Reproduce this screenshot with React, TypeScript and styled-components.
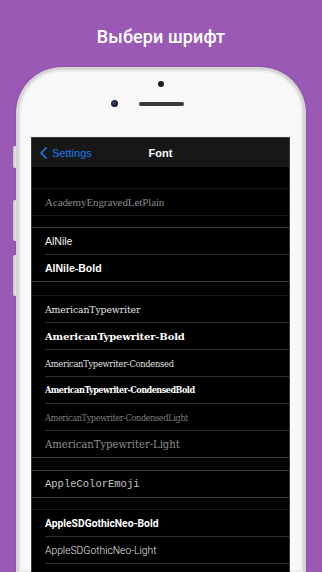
import * as React from "react";
import styled, { createGlobalStyle } from "styled-components";

type Face = {
  name: string;
  family: string;
  weight?: number;
  size: number;
  color: string;
  spacing?: number;
};

type Section = {
  gap: number;
  top: "faint" | "strong" | "none";
  bottom: "faint" | "strong" | "none";
  open?: boolean;
  rows: Face[];
};

const serif = `"Liberation Serif", serif`;
const slab = `"DejaVu Serif", serif`;
const slabNarrow = `"DejaVu Serif Condensed", "DejaVu Serif", serif`;
const sans = `"Liberation Sans", Arial, sans-serif`;
const gothic = `Roboto, "Liberation Sans", sans-serif`;

const sections: Section[] = [
  {
    gap: 21,
    top: "faint",
    bottom: "faint",
    rows: [{ name: "AcademyEngravedLetPlain", family: serif, size: 11, color: "#8a8a8a", spacing: -0.1 }],
  },
  {
    gap: 11,
    top: "strong",
    bottom: "strong",
    rows: [
      { name: "AlNile", family: sans, size: 10.5, color: "#f2f2f2" },
      { name: "AlNile-Bold", family: sans, weight: 700, size: 10.5, color: "#ffffff" },
    ],
  },
  {
    gap: 13,
    top: "faint",
    bottom: "strong",
    rows: [
      { name: "AmericanTypewriter", family: slab, size: 9.4, color: "#e4e4e4", spacing: -0.15 },
      { name: "AmericanTypewriter-Bold", family: slab, weight: 700, size: 10, color: "#ffffff", spacing: -0.15 },
      { name: "AmericanTypewriter-Condensed", family: slabNarrow, size: 9.2, color: "#e0e0e0", spacing: -0.25 },
      { name: "AmericanTypewriter-CondensedBold", family: slabNarrow, weight: 700, size: 9, color: "#ffffff", spacing: -0.5 },
      { name: "AmericanTypewriter-CondensedLight", family: slabNarrow, size: 9.2, color: "#7c7c7c", spacing: -0.45 },
      { name: "AmericanTypewriter-Light", family: slab, size: 10.2, color: "#8c8c8c", spacing: -0.1 },
    ],
  },
  {
    gap: 12,
    top: "strong",
    bottom: "strong",
    rows: [{ name: "AppleColorEmoji", family: `"Liberation Mono", monospace`, size: 10.5, color: "#c6c6c6" }],
  },
  {
    gap: 11,
    top: "faint",
    bottom: "none",
    open: true,
    rows: [
      { name: "AppleSDGothicNeo-Bold", family: gothic, weight: 700, size: 10.3, color: "#ffffff" },
      { name: "AppleSDGothicNeo-Light", family: gothic, weight: 300, size: 10.3, color: "#e6e6e6" },
    ],
  },
];

const lineColor = { faint: "#1a1a1a", strong: "#3d3d3d", none: "transparent" };

const App: React.FC = () => {
  return (
    <Page>
      <GlobalStyle />
      <Title>Выбери шрифт</Title>
      <Phone>
        <SideButton $top={76} $height={22} />
        <SideButton $top={130} $height={41} />
        <SideButton $top={185} $height={41} />
        <TopBezel>
          <Sensor />
          <SpeakerRow>
            <Camera />
            <Speaker />
          </SpeakerRow>
        </TopBezel>
        <Screen>
          <NavBar>
            <BackButton>
              <svg width="7" height="12" viewBox="0 0 7 12">
                <path d="M6 1 L1.2 6 L6 11" fill="none" stroke="#1a7cf0" strokeWidth="1.8" strokeLinecap="round" strokeLinejoin="round" />
              </svg>
              Settings
            </BackButton>
            <NavTitle>Font</NavTitle>
            <span />
          </NavBar>
          {sections.map((section, i) => (
            <SectionBlock key={i} $gap={section.gap} $top={lineColor[section.top]} $bottom={lineColor[section.bottom]}>
              {section.rows.map((row, j) => (
                <Row key={row.name} $divider={section.open || j < section.rows.length - 1}>
                  <RowText
                    $family={row.family}
                    $weight={row.weight ?? 400}
                    $size={row.size}
                    $color={row.color}
                    $spacing={row.spacing ?? 0}
                  >
                    {row.name}
                  </RowText>
                </Row>
              ))}
            </SectionBlock>
          ))}
        </Screen>
      </Phone>
    </Page>
  );
};

export default App;

const GlobalStyle = createGlobalStyle`
  html, body {
    margin: 0;
    padding: 0;
    background: #9b59b6;
    overflow: hidden;
  }
`;

const Page = styled.div`
  width: 322px;
  height: 572px;
  background: #9b59b6;
  display: flex;
  flex-direction: column;
  align-items: center;
`;

const Title = styled.h1`
  margin: 24px 0 0;
  height: 26px;
  font: 500 18px/26px Roboto, "Noto Sans", sans-serif;
  color: #ffffff;
  letter-spacing: 0.1px;
`;

const Phone = styled.div`
  position: relative;
  margin-top: 17px;
  width: 290px;
  flex: 1;
  min-height: 0;
  box-sizing: border-box;
  border: 3px solid #d4d4d4;
  border-bottom: none;
  border-radius: 46px 46px 0 0;
  background: #f8f8f8;
  box-shadow: inset 0 0 0 2px #ececec, 0 0 2px rgba(60, 20, 80, 0.35);
  display: flex;
  flex-direction: column;
`;

const SideButton = styled.div<{ $top: number; $height: number }>`
  position: absolute;
  left: -6px;
  top: ${(p) => p.$top}px;
  width: 3px;
  height: ${(p) => p.$height}px;
  border-radius: 2px 0 0 2px;
  background: linear-gradient(90deg, #c4c4c4, #e8e8e8);
`;

const TopBezel = styled.div`
  height: 67px;
  flex-shrink: 0;
  display: flex;
  flex-direction: column;
  align-items: center;
`;

const Sensor = styled.div`
  margin-top: 11px;
  width: 6px;
  height: 6px;
  border-radius: 50%;
  background: #1e1e1e;
`;

const SpeakerRow = styled.div`
  margin-top: 13px;
  width: 100%;
  display: grid;
  grid-template-columns: 1fr auto 1fr;
  align-items: center;
`;

const Camera = styled.div`
  justify-self: end;
  margin-right: 21px;
  width: 7px;
  height: 7px;
  border-radius: 50%;
  background: radial-gradient(circle at 40% 40%, #3a4a7a 0, #141828 60%, #0c0c10 100%);
`;

const Speaker = styled.div`
  width: 45px;
  height: 4px;
  border-radius: 2px;
  background: #3a3a3a;
`;

const Screen = styled.div`
  flex: 1;
  min-height: 0;
  margin: 0 13px 0 12px;
  background: #000000;
  border: 1px solid #3a3a3a;
  border-bottom: none;
  overflow: hidden;
`;

const NavBar = styled.div`
  height: 29px;
  background: #171717;
  display: grid;
  grid-template-columns: 1fr auto 1fr;
  align-items: center;
`;

const BackButton = styled.div`
  display: flex;
  align-items: center;
  gap: 5px;
  padding-left: 8px;
  font: 400 11px "Liberation Sans", Arial, sans-serif;
  color: #1a7cf0;
`;

const NavTitle = styled.div`
  font: 700 11px "Liberation Sans", Arial, sans-serif;
  color: #ffffff;
`;

const SectionBlock = styled.div<{ $gap: number; $top: string; $bottom: string }>`
  margin-top: ${(p) => p.$gap}px;
  border-top: 1px solid ${(p) => p.$top};
  border-bottom: 1px solid ${(p) => p.$bottom};
`;

const Row = styled.div<{ $divider: boolean }>`
  height: 26px;
  margin-left: 13px;
  display: flex;
  align-items: center;
  border-bottom: 1px solid ${(p) => (p.$divider ? "#2e2e2e" : "transparent")};
  margin-bottom: ${(p) => (p.$divider ? 0 : -1)}px;
`;

const RowText = styled.span<{
  $family: string;
  $weight: number;
  $size: number;
  $color: string;
  $spacing: number;
}>`
  font-family: ${(p) => p.$family};
  font-weight: ${(p) => p.$weight};
  font-size: ${(p) => p.$size}px;
  letter-spacing: ${(p) => p.$spacing}px;
  color: ${(p) => p.$color};
  white-space: nowrap;
`;
